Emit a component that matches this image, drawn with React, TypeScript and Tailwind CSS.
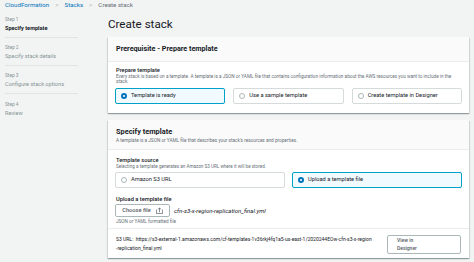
import React from 'react';

const steps = [
  { n: 1, title: 'Specify template', active: true },
  { n: 2, title: 'Specify stack details', active: false },
  { n: 3, title: 'Configure stack options', active: false },
  { n: 4, title: 'Review', active: false },
];

function Radio({ checked }: { checked: boolean }) {
  return checked ? (
    <span className="inline-block w-[6px] h-[6px] rounded-full border-[2px] border-[#0073bb] bg-white shrink-0" />
  ) : (
    <span className="inline-block w-[6px] h-[6px] rounded-full border border-[#aab7b8] bg-white shrink-0" />
  );
}

function Tile({ label, checked }: { label: string; checked?: boolean }) {
  return (
    <div
      className={
        checked
          ? 'h-[16px] flex items-center gap-[4px] pl-[5px] rounded-[2px] border border-[#00a1c9] bg-[#f1faff]'
          : 'h-[16px] flex items-center gap-[4px] pl-[5px] rounded-[2px] border border-[#d5dbdb] bg-white'
      }
    >
      <Radio checked={!!checked} />
      <span className="text-[5.7px] leading-none text-[#16191f]">{label}</span>
    </div>
  );
}

function UploadIcon() {
  return (
    <svg width="7" height="7" viewBox="0 0 16 16" fill="none" stroke="#545b64" strokeWidth="1.6">
      <path d="M1 6v9h14V6" />
      <path d="M8 12V2M4.5 5.5L8 2l3.5 3.5" />
    </svg>
  );
}

export default function App() {
  return (
    <div className="w-[474px] h-[262px] overflow-hidden bg-[#f2f3f3] text-[#16191f]" style={{ fontFamily: 'Roboto, "Liberation Sans", sans-serif' }}>
      {/* breadcrumb */}
      <div className="h-[10px] pl-[5px] flex items-center gap-[6px] text-[6.2px] leading-none">
        <span className="text-[#0073bb]">CloudFormation</span>
        <span className="text-[#aab7b8]">&gt;</span>
        <span className="text-[#0073bb]">Stacks</span>
        <span className="text-[#aab7b8]">&gt;</span>
        <span className="text-[#687078]">Create stack</span>
      </div>

      <div className="flex">
        {/* sidebar */}
        <div className="w-[108px] pl-[5px] shrink-0">
          <div className="w-[73px]">
            {steps.map((s) => (
              <div key={s.n} className={s.n < 4 ? 'h-[28px] pt-[6px] border-b border-[#e1e4e4]' : 'h-[28px] pt-[7px]'}>
                <div className="h-[8px] leading-[8px] text-[4.8px] text-[#879596]">Step {s.n}</div>
                <div
                  className={
                    s.active
                      ? 'h-[9px] leading-[9px] text-[5.6px] font-bold text-[#16191f]'
                      : 'h-[9px] leading-[9px] text-[5.6px] text-[#879596]'
                  }
                >
                  {s.title}
                </div>
              </div>
            ))}
          </div>
        </div>

        {/* main */}
        <div className="w-[361px] shrink-0">
          <h1 className="mt-[6px] h-[16px] leading-[16px] text-[11.6px] text-[#16191f]">Create stack</h1>

          {/* panel 1 */}
          <div className="mt-[5px] bg-white shadow-[0_1px_1px_0_rgba(0,28,36,0.25),1px_1px_1px_0_rgba(0,28,36,0.1),-1px_1px_1px_0_rgba(0,28,36,0.1)]">
            <div className="h-[25px] px-[8px] flex items-center bg-[#fafafa] border-b border-[#eaeded]">
              <span className="text-[7.2px] font-bold">Prerequisite - Prepare template</span>
            </div>
            <div className="px-[7px] pb-[9px]">
              <div className="pt-[4px] pl-[1px] h-[12px] leading-[8px] text-[5.7px] font-medium">Prepare template</div>
              <div className="pl-[1px] leading-[5px] text-[4.7px] text-[#687078]">
                Every stack is based on a template. A template is a JSON or YAML file that contains configuration information about the AWS resources you want to include in the
                <br />
                stack.
              </div>
              <div className="mt-[3.5px] grid grid-cols-3 gap-[8px]">
                <Tile label="Template is ready" checked />
                <Tile label="Use a sample template" />
                <Tile label="Create template in Designer" />
              </div>
            </div>
          </div>

          {/* panel 2 */}
          <div className="mt-[7px] bg-white shadow-[0_1px_1px_0_rgba(0,28,36,0.25),1px_1px_1px_0_rgba(0,28,36,0.1),-1px_1px_1px_0_rgba(0,28,36,0.1)]">
            <div className="h-[30px] px-[8px] pt-[7px] bg-[#fafafa] border-b border-[#eaeded]">
              <div className="h-[10px] leading-[10px] text-[7.4px] font-bold">Specify template</div>
              <div className="mt-[1px] h-[6px] leading-[6px] text-[4.7px] text-[#687078]">
                A template is a JSON or YAML file that describes your stack's resources and properties.
              </div>
            </div>
            <div className="px-[7px]">
              <div className="pt-[6px] pl-[1px] h-[14px] leading-[8px] text-[5.7px] font-medium">Template source</div>
              <div className="pl-[1px] h-[5px] leading-[5px] text-[4.6px] text-[#687078]">
                Selecting a template generates an Amazon S3 URL where it will be stored.
              </div>
              <div className="mt-[3px] grid grid-cols-2 gap-[7px]">
                <Tile label="Amazon S3 URL" />
                <Tile label="Upload a template file" checked />
              </div>

              <div className="mt-[7px] pl-[1px] h-[8px] leading-[8px] text-[5.7px] font-medium">Upload a template file</div>
              <div className="mt-[1px] flex items-center gap-[4px]">
                <div className="h-[13px] w-[55px] flex items-center justify-center gap-[5px] border border-[#aab7b8] rounded-[2px] bg-white">
                  <span className="text-[5.7px] font-medium text-[#545b64]">Choose file</span>
                  <UploadIcon />
                </div>
                <span className="text-[6px] italic text-[#16191f]">cfn-s3-x-region-replication_final.yml</span>
              </div>
              <div className="mt-[2.5px] pl-[1px] h-[5px] leading-[5px] text-[4.7px] text-[#687078]">JSON or YAML formatted file</div>
            </div>
            <div className="mt-[3.5px] border-t border-[#eaeded] px-[8px] pt-[6px] pb-[4px] flex items-center justify-between">
              <div className="leading-[9px] text-[5px] text-[#16191f]">
                <div>
                  S3 URL:&nbsp;&nbsp;https://s3-external-1.amazonaws.com/cf-templates-1v36rkj4fq1a5-us-east-1/2020244EOw-cfn-s3-x-region
                </div>
                <div>-replication_final.yml</div>
              </div>
              <div className="w-[74px] h-[19px] px-[9px] flex flex-col justify-center border border-[#aab7b8] rounded-[2px] bg-white text-[5px] leading-[8px] font-medium text-[#545b64]">
                <span>View in</span>
                <span>Designer</span>
              </div>
            </div>
          </div>
        </div>
      </div>
    </div>
  );
}
